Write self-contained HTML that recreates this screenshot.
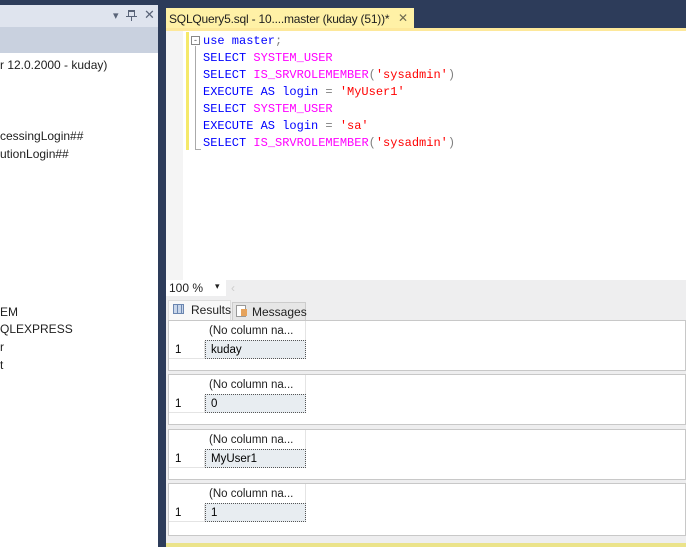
<!DOCTYPE html>
<html><head><style>
*{margin:0;padding:0;box-sizing:border-box}
body{width:686px;height:547px;overflow:hidden;background:#2d3c5a;font-family:"Liberation Sans",sans-serif;position:relative}
.a{position:absolute}
.lt{font-size:12px;color:#1e1e1e;left:0;white-space:nowrap}
.code{font-family:"Liberation Mono",monospace;font-size:12px;white-space:pre;left:203px;color:#0000ff}
.m{color:#ff00ff}.s{color:#ff0000}.g{color:#808080}.k{color:#000}
.grid{left:168px;width:518px;background:#fff;border:1px solid #c8c8c8;font-size:11.5px;color:#000}
.hd{position:absolute;left:36px;top:0;width:101px;height:20px;background:#fff;border-right:1px solid #e4e4e4;border-bottom:1px solid #e4e4e4;padding:4px 0 0 4px;color:#222}
.rn{position:absolute;left:0;top:20px;width:36px;height:18px;border-bottom:1px solid #e4e4e4;border-right:1px solid #e4e4e4;padding:3px 0 0 6px}
.cl{position:absolute;left:36px;top:19px;width:101px;height:19px;background:#e8edf1;border:1px dotted #555;padding:3px 0 0 5px}
</style></head><body>
<!-- left panel -->
<div class="a" style="left:0;top:5px;width:158px;height:22px;background:#dfe4ee"></div>
<div class="a" style="left:113px;top:9px;font-size:11px;color:#5a6478">▾</div>
<div class="a" style="left:128px;top:10px;width:7px;height:7px;border:1px solid #5a6478;border-top:2px solid #5a6478"></div>
<div class="a" style="left:131px;top:17px;width:1px;height:4px;background:#5a6478"></div>
<div class="a" style="left:126px;top:16px;width:11px;height:1px;background:#5a6478"></div>
<div class="a" style="left:144px;top:7px;font-size:13px;color:#5a6478">✕</div>
<div class="a" style="left:0;top:27px;width:158px;height:26px;background:#c9d1df"></div>
<div class="a" style="left:0;top:53px;width:158px;height:494px;background:#fff"></div>
<div class="a lt" style="top:58px">r 12.0.2000 - kuday)</div>
<div class="a lt" style="top:129px">cessingLogin##</div>
<div class="a lt" style="top:147px">utionLogin##</div>
<div class="a lt" style="top:305px">EM</div>
<div class="a lt" style="top:322px">QLEXPRESS</div>
<div class="a lt" style="top:340px">r</div>
<div class="a lt" style="top:358px">t</div>
<!-- tab -->
<div class="a" style="left:166px;top:8px;width:248px;height:22px;background:#fff1a6;font-size:12px;letter-spacing:-0.2px;color:#1e1e1e;padding:4px 0 0 3px;white-space:nowrap">SQLQuery5.sql - 10....master (kuday (51))*</div>
<div class="a" style="left:398px;top:11px;font-size:12px;color:#6d6a50">✕</div>
<div class="a" style="left:166px;top:28px;width:520px;height:3px;background:#fde89a"></div>
<!-- editor -->
<div class="a" style="left:166px;top:31px;width:520px;height:249px;background:#fff"></div>
<div class="a" style="left:166px;top:31px;width:17px;height:249px;background:#f4f4f4"></div>
<div class="a" style="left:186px;top:32px;width:3px;height:118px;background:#f5e96a"></div>
<div class="a" style="left:191px;top:36px;width:9px;height:9px;border:1px solid #888;font-size:9px;line-height:7px;text-align:center;color:#555">-</div>
<div class="a" style="left:195px;top:46px;width:6px;height:104px;border-left:1px solid #aaa;border-bottom:1px solid #aaa"></div>
<div class="a code" style="top:33px;line-height:17px">use master<span class="g">;</span>
SELECT <span class="m">SYSTEM_USER</span>
SELECT <span class="m">IS_SRVROLEMEMBER</span><span class="g">(</span><span class="s">'sysadmin'</span><span class="g">)</span>
EXECUTE AS login <span class="g">=</span> <span class="s">'MyUser1'</span>
SELECT <span class="m">SYSTEM_USER</span>
EXECUTE AS login <span class="g">=</span> <span class="s">'sa'</span>
SELECT <span class="m">IS_SRVROLEMEMBER</span><span class="g">(</span><span class="s">'sysadmin'</span><span class="g">)</span></div>
<!-- lower area -->
<div class="a" style="left:166px;top:280px;width:520px;height:263px;background:#eeeeef"></div>
<div class="a" style="left:166px;top:280px;width:60px;height:16px;background:#fff;font-size:12px;padding:1px 0 0 3px;color:#1e1e1e">100 %<span style="position:absolute;left:49px;top:1px;font-size:9px">▾</span></div>
<div class="a" style="left:231px;top:281px;font-size:12px;color:#ccc">‹</div>
<div class="a" style="left:168px;top:300px;width:63px;height:20px;background:#f8f8f8;border:1px solid #ddd;border-bottom:none;font-size:12px;padding:2px 0 0 22px;color:#1e1e1e">Results</div>
<div class="a" style="left:173px;top:304px;width:11px;height:10px;border:1px solid #6b86b0;background:repeating-linear-gradient(90deg,#c8d6ea 0 3px,#6b86b0 3px 4px)"></div>
<div class="a" style="left:232px;top:302px;width:74px;height:18px;background:#e6e6e6;border:1px solid #ccc;border-bottom:none;font-size:12px;padding:2px 0 0 19px;color:#1e1e1e">Messages</div>
<div class="a" style="left:236px;top:305px;width:10px;height:12px;border:1px solid #999;background:#fff"></div>
<div class="a" style="left:241px;top:309px;width:6px;height:7px;background:#e6a35c"></div>

<div class="a grid" style="top:320px;height:51px"><div class="hd">(No column na...</div><div class="rn">1</div><div class="cl">kuday</div></div>
<div class="a grid" style="top:374px;height:51px"><div class="hd">(No column na...</div><div class="rn">1</div><div class="cl">0</div></div>
<div class="a grid" style="top:429px;height:51px"><div class="hd">(No column na...</div><div class="rn">1</div><div class="cl">MyUser1</div></div>
<div class="a grid" style="top:483px;height:53px"><div class="hd">(No column na...</div><div class="rn">1</div><div class="cl">1</div></div>
<div class="a" style="left:166px;top:543px;width:520px;height:4px;background:#ebe38a"></div>
</body></html>
